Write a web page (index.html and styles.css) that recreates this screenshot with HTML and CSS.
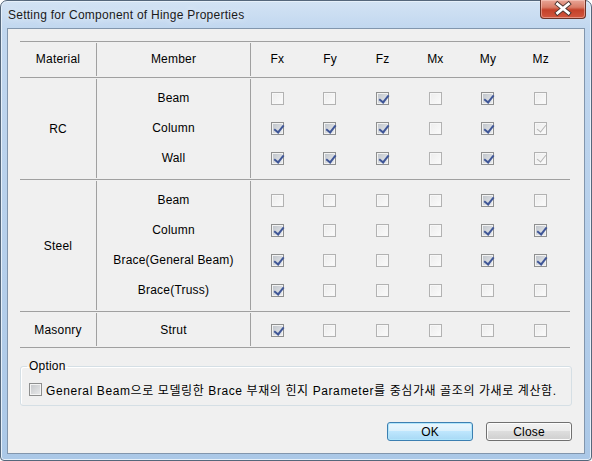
FILE: index.html
```html
<!DOCTYPE html>
<html lang="ko">

<head>
    <meta charset="UTF-8">
    <title>Setting for Component of Hinge Properties</title>
    <link rel="stylesheet" href="styles.css">
</head>

<body>
    <div class="window">
        <div class="titlebar">
            <span class="title">Setting for Component of Hinge Properties</span>
            <span class="close">
                <svg width="44" height="17" viewBox="0 0 44 17">
                    <path d="M16.5 4 L27.5 13 M27.5 4 L16.5 13" stroke="#4a3430" stroke-width="4.6" stroke-linecap="square" fill="none" />
                    <path d="M16.5 4 L27.5 13 M27.5 4 L16.5 13" stroke="#fff" stroke-width="2.8" stroke-linecap="square" fill="none" />
                </svg>
            </span>
        </div>

        <div class="client">
            <div class="table">
                <!-- header -->
                <div class="sect head">
                    <div class="mat">Material</div>
                    <div class="members">
                        <div class="row">Member</div>
                    </div>
                    <div class="checks">
                        <div class="row">
                            <span>Fx</span><span>Fy</span><span>Fz</span><span>Mx</span><span>My</span><span>Mz</span>
                        </div>
                    </div>
                </div>

                <!-- RC -->
                <div class="sect">
                    <div class="mat">RC</div>
                    <div class="members">
                        <div class="row">Beam</div>
                        <div class="row">Column</div>
                        <div class="row">Wall</div>
                    </div>
                    <div class="checks">
                        <div class="row">
                            <span class="cb"></span><span class="cb"></span><span class="cb on"></span>
                            <span class="cb"></span><span class="cb on"></span><span class="cb"></span>
                        </div>
                        <div class="row">
                            <span class="cb on"></span><span class="cb on"></span><span class="cb on"></span>
                            <span class="cb"></span><span class="cb on"></span><span class="cb dim"></span>
                        </div>
                        <div class="row">
                            <span class="cb on"></span><span class="cb on"></span><span class="cb on"></span>
                            <span class="cb"></span><span class="cb on"></span><span class="cb dim"></span>
                        </div>
                    </div>
                </div>

                <!-- Steel -->
                <div class="sect">
                    <div class="mat">Steel</div>
                    <div class="members">
                        <div class="row">Beam</div>
                        <div class="row">Column</div>
                        <div class="row">Brace(General Beam)</div>
                        <div class="row">Brace(Truss)</div>
                    </div>
                    <div class="checks">
                        <div class="row">
                            <span class="cb"></span><span class="cb"></span><span class="cb"></span>
                            <span class="cb"></span><span class="cb on"></span><span class="cb"></span>
                        </div>
                        <div class="row">
                            <span class="cb on"></span><span class="cb"></span><span class="cb"></span>
                            <span class="cb"></span><span class="cb on"></span><span class="cb on"></span>
                        </div>
                        <div class="row">
                            <span class="cb on"></span><span class="cb"></span><span class="cb"></span>
                            <span class="cb"></span><span class="cb on"></span><span class="cb on"></span>
                        </div>
                        <div class="row">
                            <span class="cb on"></span><span class="cb"></span><span class="cb"></span>
                            <span class="cb"></span><span class="cb"></span><span class="cb"></span>
                        </div>
                    </div>
                </div>

                <!-- Masonry -->
                <div class="sect short">
                    <div class="mat">Masonry</div>
                    <div class="members">
                        <div class="row">Strut</div>
                    </div>
                    <div class="checks">
                        <div class="row">
                            <span class="cb on"></span><span class="cb"></span><span class="cb"></span>
                            <span class="cb"></span><span class="cb"></span><span class="cb"></span>
                        </div>
                    </div>
                </div>
            </div>

            <fieldset class="option">
                <legend>Option</legend>
                <label class="opt-row">
                    <span class="cb plain"></span>
                    <span class="opt-text">General Beam으로 모델링한 Brace 부재의 힌지 Parameter를 중심가새 골조의 가새로 계산함.</span>
                </label>
            </fieldset>

            <div class="buttons">
                <button class="btn default">OK</button>
                <button class="btn">Close</button>
            </div>
        </div>
    </div>
</body>

</html>
```

FILE: styles.css
```css
* {
    margin: 0;
    padding: 0;
    box-sizing: border-box;
}

body {
    background: #fff;
    font-family: "Liberation Sans", "Noto Sans CJK KR", sans-serif;
    font-size: 12px;
    letter-spacing: 0.2px;
    color: #000;
}

/* window frame */
.window {
    width: 592px;
    height: 461px;
    display: flex;
    flex-direction: column;
    border: 1px solid #55677b;
    border-radius: 7px 7px 4px 4px;
    background: linear-gradient(180deg, #d3e3f4 0, #c1d7ef 28px, #abc8e7 100%);
    box-shadow: inset 0 0 0 1px #e6f0fa;
}

.titlebar {
    height: 27px;
    display: flex;
    align-items: center;
    padding: 0 5px 0 7px;
}

.title {
    flex: 1;
    font-size: 12px;
    letter-spacing: 0.25px;
    color: #1a1a1a;
    text-shadow: 0 0 6px #eef5fc;
}

.close {
    align-self: flex-start;
    width: 46px;
    height: 19px;
    margin-top: -1px;
    border: 1px solid #6b3328;
    border-top: 0;
    border-radius: 0 0 4px 4px;
    background: linear-gradient(180deg, #e8a597 0, #d97d68 40%, #c4412a 55%, #d2573f 100%);
    box-shadow: inset 0 0 0 1px rgba(255, 220, 210, 0.45);
}

.close svg {
    display: block;
}

/* client area */
.client {
    flex: 1;
    display: flex;
    flex-direction: column;
    margin: 0 6px 6px;
    padding: 12px 14px 0 12px;
    border: 1px solid #8296ad;
    background: #f0f0f0;
}

.table {
    border-top: 1px solid #a0a0a0;
}

.sect {
    display: flex;
    border-bottom: 1px solid #a0a0a0;
}

.mat {
    width: 77px;
    margin: 1px 0;
    border-right: 1px solid #a0a0a0;
    display: flex;
    align-items: center;
    justify-content: center;
}

.members {
    width: 154px;
    margin: 1px 0;
    padding: 4px 0 5px;
    border-right: 1px solid #a0a0a0;
}

.checks {
    flex: 1;
    padding: 5px 3px 6px 0;
}

.row {
    height: 30px;
    display: flex;
    align-items: center;
    justify-content: center;
}

.checks .row {
    display: grid;
    grid-template-columns: repeat(6, 1fr);
    justify-items: center;
}

.head .mat {
    padding-bottom: 2px;
}

.head .members {
    padding: 0;
}

.head .row {
    height: 33px;
    padding-bottom: 2px;
}

.head .checks {
    padding: 1px 3px 1px 0;
}

.short .members {
    padding: 2px 0 1px;
}

.short .checks {
    padding: 3px 3px 2px 0;
}

/* checkboxes */
.cb {
    position: relative;
    display: block;
    width: 13px;
    height: 13px;
    border: 1px solid #b2b2b2;
    background: linear-gradient(135deg, #ececec, #fbfbfb);
    box-shadow: inset 0 0 0 1px #f7f7f7;
    flex: none;
}

.cb.on {
    border-color: #8e8f8f;
    background: linear-gradient(135deg, #bcc1c8, #eceef0);
    box-shadow: inset 0 0 0 1px #f2f2f2;
}

.cb.on::after,
.cb.dim::after {
    content: "";
    position: absolute;
    left: 4px;
    top: 0;
    width: 4px;
    height: 8px;
    border-right: 2px solid #3f5697;
    border-bottom: 2px solid #3f5697;
    transform: rotate(38deg);
}

.cb.dim::after {
    border-color: #b4b4b4;
    border-width: 0 1.5px 1.5px 0;
}

.cb.plain {
    border-color: #8e8f8f;
    background: linear-gradient(135deg, #c4c6c9, #eaebec);
    box-shadow: inset 0 0 0 1px #f4f4f4;
}

/* option group */
.option {
    margin: 11px -2px 0 0;
    padding: 6px 8px;
    border: 1px solid #d5dfe5;
    border-radius: 3px;
    box-shadow: inset 1px 1px 0 #fff;
}

.option legend {
    padding: 0 2px;
    margin-left: -2px;
    line-height: 14px;
}

.opt-row {
    display: flex;
    align-items: center;
    gap: 4px;
    height: 20px;
}

.opt-text {
    letter-spacing: 0.6px;
    white-space: nowrap;
}

/* buttons */
.buttons {
    display: flex;
    justify-content: flex-end;
    gap: 13px;
    margin: 16px -2px 0 0;
}

.btn {
    width: 86px;
    height: 19px;
    font-family: "Liberation Sans", sans-serif;
    font-size: 12px;
    line-height: 16px;
    letter-spacing: 0.2px;
    color: #000;
    border: 1px solid #707070;
    border-radius: 3px;
    background: linear-gradient(180deg, #f2f2f2 0, #ebebeb 50%, #dddddd 50%, #cfcfcf 100%);
    box-shadow: inset 0 0 0 1px #fcfcfc;
}

.btn.default {
    border-color: #3c7fb1;
    background: linear-gradient(180deg, #eaf6fd 0, #d9f0fc 50%, #bee6fd 50%, #a7d9f5 100%);
    box-shadow: inset 0 0 0 1px #b0e5fb;
}
```
